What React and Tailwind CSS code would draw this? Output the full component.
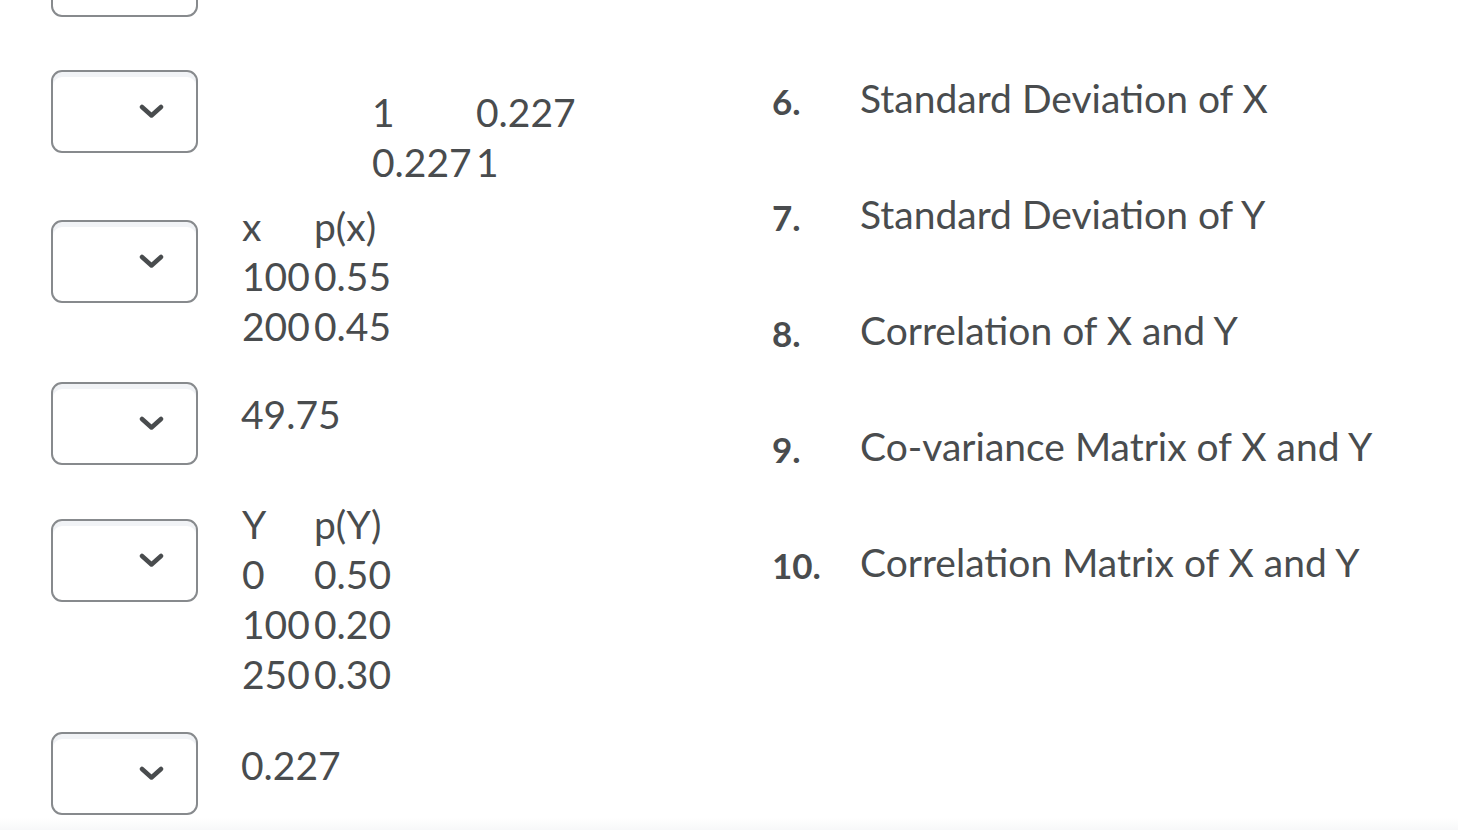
const font = { fontFamily: "Lato, 'Noto Sans', sans-serif" };

const Chevron = () => (
  <svg width="25" height="15" viewBox="0 0 25 15" fill="none">
    <polyline
      points="3,3 12.5,11.5 22,3"
      stroke="#494c4e"
      strokeWidth="4.5"
      strokeLinecap="round"
      strokeLinejoin="round"
    />
  </svg>
);

const SelectBox = ({ className = "" }) => (
  <div
    className={`w-[147px] h-[83px] shrink-0 rounded-[11px] border-2 border-[#878a8d] bg-white shadow-[inset_0_5px_0_0_rgba(185,194,208,0.2)] flex items-center justify-end pr-[32px] ${className}`}
  >
    <Chevron />
  </div>
);

const Table = ({ rows, col }) => (
  <div className="leading-[50px]">
    {rows.map((r, i) => (
      <div key={i} className="flex">
        <span className={col}>{r[0]}</span>
        <span>{r[1]}</span>
      </div>
    ))}
  </div>
);

const questions = [
  { n: "5.", t: "" },
  { n: "6.", t: "Standard Deviation of X" },
  { n: "7.", t: "Standard Deviation of Y" },
  { n: "8.", t: "Correlation of X and Y" },
  { n: "9.", t: "Co-variance Matrix of X and Y" },
  { n: "10.", t: "Correlation Matrix of X and Y" },
];

export default function App() {
  return (
    <main
      className="h-[830px] w-full overflow-hidden bg-white text-[#494c4e] text-[39px] flex flex-col"
      style={font}
    >
      <div className="flex-1 flex">
        {/* answers column */}
        <div className="w-[772px] shrink-0 pl-[51px]">
          <SelectBox className="-mt-[66px]" />

          <div className="flex mt-[53px]">
            <SelectBox />
            <div className="ml-[174px] mt-[17px]">
              <Table
                col="w-[104px]"
                rows={[
                  ["1", "0.227"],
                  ["0.227", "1"],
                ]}
              />
            </div>
          </div>

          <div className="flex mt-[14px]">
            <SelectBox className="mt-[19px]" />
            <div className="ml-[44px]">
              <Table
                col="w-[72px]"
                rows={[
                  ["x", "p(x)"],
                  ["100", "0.55"],
                  ["200", "0.45"],
                ]}
              />
            </div>
          </div>

          <div className="flex mt-[31px]">
            <SelectBox />
            <div className="ml-[43px] mt-[7px] leading-[50px]">49.75</div>
          </div>

          <div className="flex mt-[34px]">
            <SelectBox className="mt-[20px]" />
            <div className="ml-[44px]">
              <Table
                col="w-[72px]"
                rows={[
                  ["Y", "p(Y)"],
                  ["0", "0.50"],
                  ["100", "0.20"],
                  ["250", "0.30"],
                ]}
              />
            </div>
          </div>

          <div className="flex mt-[33px]">
            <SelectBox />
            <div className="ml-[43px] mt-[8px] leading-[50px]">0.227</div>
          </div>
        </div>

        {/* questions column */}
        <div className="-mt-[43px]">
          {questions.map((q) => (
            <div key={q.n} className="flex items-baseline h-[116px]">
              <span className="w-[88px] shrink-0 font-bold text-[35px] leading-[50px] translate-y-[2px]">
                {q.n}
              </span>
              <span className="leading-[50px]">{q.t}</span>
            </div>
          ))}
        </div>
      </div>
      <div className="h-[12px] bg-gradient-to-b from-white to-[#f7f8f9]" />
    </main>
  );
}
